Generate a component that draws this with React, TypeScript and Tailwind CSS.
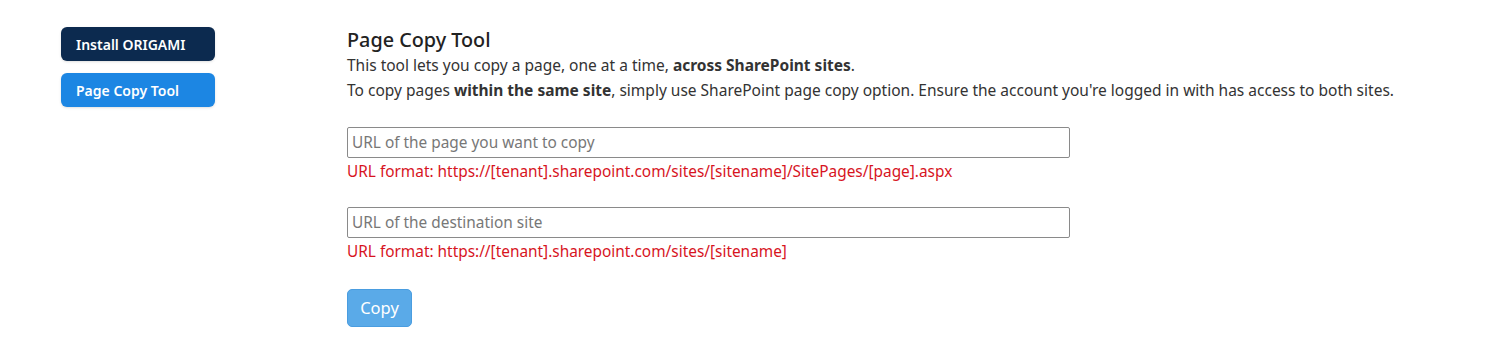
export default function App() {
  const font = { fontFamily: '"Noto Sans", "Open Sans", sans-serif' };

  return (
    <div className="flex h-[349px] w-full bg-white text-[#212529]" style={font}>
      {/* sidebar */}
      <div className="flex w-[347px] shrink-0 flex-col gap-3 pl-[61px] pt-[27px]">
        <button
          type="button"
          className="flex h-[34px] w-[154px] items-center rounded-md bg-[#0c2a4f] px-[15px] text-[14px] font-semibold text-white shadow-sm"
        >
          Install ORIGAMI
        </button>
        <button
          type="button"
          className="flex h-[34px] w-[154px] items-center rounded-md bg-[#1c86e3] px-[15px] text-[14px] font-semibold text-white shadow-sm"
        >
          Page Copy Tool
        </button>
      </div>

      {/* main */}
      <div className="flex flex-col pt-[27px]">
        <h1 className="text-[19.8px] leading-[26px] font-medium text-[#222]">Page Copy Tool</h1>
        <p className="text-[15.5px] leading-[25px] text-[#333]">
          This tool lets you copy a page, one at a time, <b>across SharePoint sites</b>.
        </p>
        <p className="text-[15.5px] leading-[25px] text-[#333]">
          To copy pages <b>within the same site</b>, simply use SharePoint page copy option. Ensure the account
          you&apos;re logged in with has access to both sites.
        </p>

        <input
          className="mt-[24px] h-[31px] w-[723px] rounded-[2px] border border-[#8a8a8a] px-[4px] text-[15.4px] placeholder:text-[#777] outline-none"
          placeholder="URL of the page you want to copy"
        />
        <p className="mt-[3px] text-[15.4px] leading-[22px] text-[#d7141e]">
          URL format: https://[tenant].sharepoint.com/sites/[sitename]/SitePages/[page].aspx
        </p>

        <input
          className="mt-[24px] h-[31px] w-[723px] rounded-[2px] border border-[#8a8a8a] px-[4px] text-[15.4px] placeholder:text-[#777] outline-none"
          placeholder="URL of the destination site"
        />
        <p className="mt-[3px] text-[15.4px] leading-[22px] text-[#d7141e]">
          URL format: https://[tenant].sharepoint.com/sites/[sitename]
        </p>

        <div className="mt-[26px]">
          <button
            type="button"
            className="h-[38px] w-[65px] rounded-[5px] border border-[#4a9de0] bg-[#5aaae8] text-[16.5px] text-white"
          >
            Copy
          </button>
        </div>
      </div>
    </div>
  );
}
